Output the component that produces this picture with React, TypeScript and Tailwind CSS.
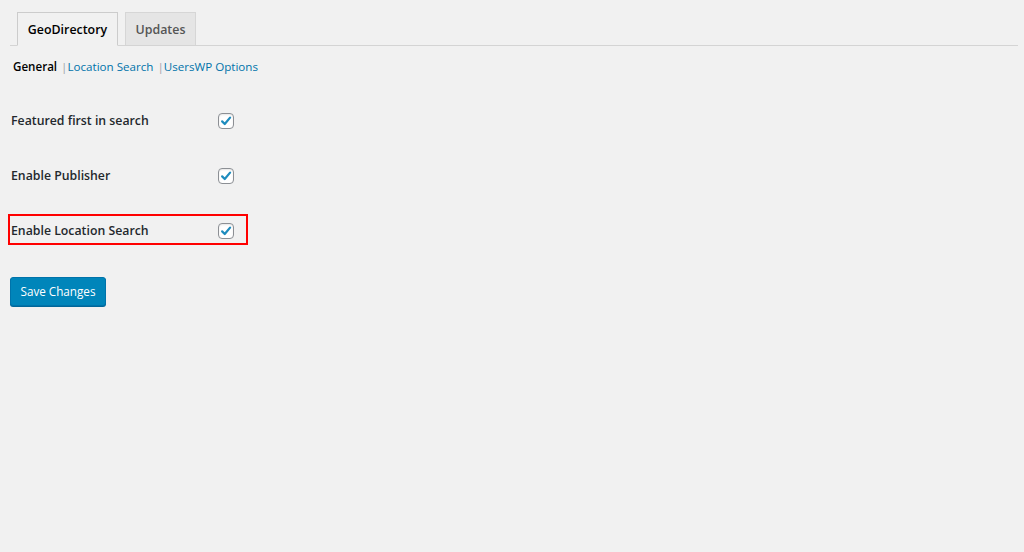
import React from "react";

function Check() {
  return (
    <span className="flex h-[16px] w-[16px] items-center justify-center rounded-[4px] border border-[#8c8f94] bg-white shadow-[inset_0_1px_2px_rgba(0,0,0,0.1)]">
      <svg width="14" height="14" viewBox="0 0 20 20">
        <path d="M4.5 10.5 L8.2 14.2 L15.8 5.2" fill="none" stroke="#1e8cbe" strokeWidth="3.2" strokeLinecap="round" strokeLinejoin="round" />
      </svg>
    </span>
  );
}

function Row({ label, boxed }: { label: string; boxed?: boolean }) {
  return (
    <div className="relative flex h-[55px] items-center">
      <div className="w-[208px] pl-[1px] pt-[1px] text-[12.3px] font-semibold text-[#23282d]">{label}</div>
      <Check />
      {boxed && (
        <div className="pointer-events-none absolute left-[-2px] top-[11px] h-[31px] w-[240px] border-[2.5px] border-[#ff0000]" />
      )}
    </div>
  );
}

export default function App() {
  return (
    <div className="min-h-[552px] w-full bg-[#f1f1f1] pl-[10px] pr-[6px] pt-[12px] font-['Open_Sans',sans-serif] text-[#23282d]">
      <div className="flex h-[34px] items-stretch gap-[7px] border-b border-[#d4d4d4] pl-[7px]">
        <div className="-mb-px flex w-[101px] items-center justify-center border border-[#cccccc] border-b-[#f1f1f1] bg-[#f1f1f1] pt-[3px] text-[12.4px] font-semibold text-[#000]">
          GeoDirectory
        </div>
        <div className="flex w-[71px] items-center justify-center border border-b-0 border-[#d6d6d6] bg-[#e5e5e5] pt-[3px] text-[12.4px] font-semibold text-[#555]">
          Updates
        </div>
      </div>
      <div className="mt-[11px] flex h-[20px] items-center pl-[3px] text-[11.6px]">
        <span className="font-semibold text-[#000]">General</span>
        <span className="ml-[4px] text-[#a0a5aa]">|</span>
        <span className="text-[#0073aa]">Location Search</span>
        <span className="ml-[4px] text-[#a0a5aa]">|</span>
        <span className="text-[#0073aa]">UsersWP Options</span>
      </div>
      <div className="mt-[16px]">
        <Row label="Featured first in search" />
        <Row label="Enable Publisher" />
        <Row label="Enable Location Search" boxed />
      </div>
      <div className="mt-[19px]">
        <button className="h-[29px] w-[96px] rounded-[3px] border border-[#0073aa] bg-[#0085ba] text-[11.7px] text-white shadow-[0_1px_0_#006799]">
          Save Changes
        </button>
      </div>
    </div>
  );
}
